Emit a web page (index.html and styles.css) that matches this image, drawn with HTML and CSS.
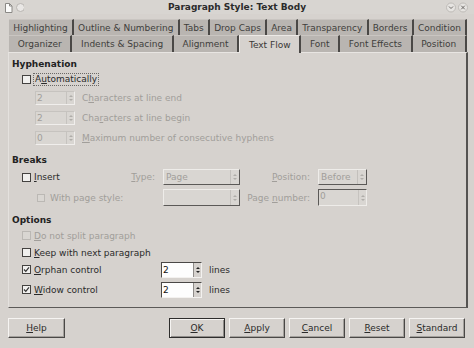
FILE: index.html
```html
<!DOCTYPE html>
<html lang="en">
<head>
    <meta charset="UTF-8">
    <title>Paragraph Style: Text Body</title>
    <link rel="stylesheet" href="styles.css">
</head>
<body>
<div class="window">
    <div class="titlebar">
        <div class="tb-left">
            <svg width="24" height="12" viewBox="0 0 24 12">
                <path d="M5.5 2.5 h4 l2.5 2.5 v6.5 h-6.5 z" fill="#fbfbfa" stroke="#8a8885" stroke-width="1"/>
                <path d="M9.5 2.5 v2.5 h2.5" fill="none" stroke="#8a8885" stroke-width="1"/>
                <circle cx="20.5" cy="6.5" r="4" fill="#e9e7e5" stroke="#b9b6b2"/>
            </svg>
        </div>
        <div class="title">Paragraph Style: Text Body</div>
        <div class="tb-right">
            <svg width="26" height="12" viewBox="0 0 26 12">
                <circle cx="7" cy="6.5" r="4.5" fill="#e6e4e1" stroke="#bebbb7"/>
                <path d="M5 5.5 l2 2 l2 -2" fill="none" stroke="#6d6a67" stroke-width="1"/>
                <circle cx="19" cy="6.5" r="4.5" fill="#e6e4e1" stroke="#bebbb7"/>
                <path d="M17.2 4.7 l3.6 3.6 M20.8 4.7 l-3.6 3.6" fill="none" stroke="#6d6a67" stroke-width="1"/>
            </svg>
        </div>
    </div>

    <div class="tabs">
        <div class="tabrow row-top">
            <div class="tab">Highlighting</div>
            <div class="tab">Outline &amp; Numbering</div>
            <div class="tab">Tabs</div>
            <div class="tab">Drop Caps</div>
            <div class="tab">Area</div>
            <div class="tab">Transparency</div>
            <div class="tab">Borders</div>
            <div class="tab">Condition</div>
        </div>
        <div class="tabrow row-bottom">
            <div class="tab">Organizer</div>
            <div class="tab">Indents &amp; Spacing</div>
            <div class="tab">Alignment</div>
            <div class="tab active">Text Flow</div>
            <div class="tab">Font</div>
            <div class="tab">Font Effects</div>
            <div class="tab">Position</div>
        </div>
    </div>

    <div class="panel">
        <!-- Hyphenation -->
        <div class="group">
            <h2 class="ghead">Hyphenation</h2>
            <div class="auto-row">
                <span class="chk"></span>
                <span class="focus">A<u>u</u>tomatically</span>
            </div>
            <div class="sp-row">
                <div class="spin dis"><span class="val">2</span><span class="arr"><i class="up"></i><i class="dn"></i></span></div>
                <span class="lbl dis">C<u>h</u>aracters at line end</span>
            </div>
            <div class="sp-row">
                <div class="spin dis"><span class="val">2</span><span class="arr"><i class="up"></i><i class="dn"></i></span></div>
                <span class="lbl dis">Cha<u>r</u>acters at line begin</span>
            </div>
            <div class="sp-row">
                <div class="spin dis"><span class="val">0</span><span class="arr"><i class="up"></i><i class="dn"></i></span></div>
                <span class="lbl dis"><u>M</u>aximum number of consecutive hyphens</span>
            </div>
        </div>

        <!-- Breaks -->
        <div class="group breaks">
            <h2 class="ghead">Breaks</h2>
            <div class="brk-row first">
                <div class="brk-check"><span class="chk"></span><span class="lbl"><u>I</u>nsert</span></div>
                <span class="rlbl dis"><u>T</u>ype:</span>
                <div class="combo dis"><span class="val">Page</span><span class="arr"><i class="up"></i><i class="dn"></i></span></div>
                <span class="rlbl dis"><u>P</u>osition:</span>
                <div class="combo dis small"><span class="val">Before</span><span class="arr"><i class="up"></i><i class="dn"></i></span></div>
            </div>
            <div class="brk-row second">
                <div class="brk-check sub"><span class="chk dis"></span><span class="lbl dis">With page style:</span></div>
                <span class="rlbl"></span>
                <div class="combo dis tall"><span class="val"></span><span class="arr"><i class="up"></i><i class="dn"></i></span></div>
                <span class="rlbl dis">Page <u>n</u>umber:</span>
                <div class="spin dis tall"><span class="val">0</span><span class="arr"><i class="up"></i><i class="dn"></i></span></div>
            </div>
        </div>

        <!-- Options -->
        <div class="group options">
            <h2 class="ghead">Options</h2>
            <div class="opt-row">
                <div class="brk-check"><span class="chk dis"></span><span class="lbl dis"><u>D</u>o not split paragraph</span></div>
            </div>
            <div class="opt-row">
                <div class="brk-check"><span class="chk"></span><span class="lbl"><u>K</u>eep with next paragraph</span></div>
            </div>
            <div class="opt-row">
                <div class="brk-check wide"><span class="chk on"><svg width="7" height="7" viewBox="0 0 7 7"><path d="M1 3.5 l1.8 1.8 l3.2 -4" fill="none" stroke="#333" stroke-width="1.2"/></svg></span><span class="lbl"><u>O</u>rphan control</span></div>
                <div class="spin live"><span class="val">2</span><span class="arr"><i class="up"></i><i class="dn"></i></span></div>
                <span class="lines">lines</span>
            </div>
            <div class="opt-row last">
                <div class="brk-check wide"><span class="chk on"><svg width="7" height="7" viewBox="0 0 7 7"><path d="M1 3.5 l1.8 1.8 l3.2 -4" fill="none" stroke="#333" stroke-width="1.2"/></svg></span><span class="lbl"><u>W</u>idow control</span></div>
                <div class="spin live"><span class="val">2</span><span class="arr"><i class="up"></i><i class="dn"></i></span></div>
                <span class="lines">lines</span>
            </div>
        </div>
    </div>

    <div class="buttons">
        <button class="btn help"><u>H</u>elp</button>
        <button class="btn default"><u>O</u>K</button>
        <button class="btn"><u>A</u>pply</button>
        <button class="btn"><u>C</u>ancel</button>
        <button class="btn"><u>R</u>eset</button>
        <button class="btn"><u>S</u>tandard</button>
    </div>
</div>
</body>
</html>
```
FILE: styles.css
```css
*{
    margin: 0;
    padding: 0;
    box-sizing: border-box;
}
body{
    width: 474px;
    height: 348px;
    overflow: hidden;
    background-color: #d6d2ce;
    font-family: "DejaVu Sans", sans-serif;
    font-size: 9px;
    color: #2a2a2a;
}
u{
    text-decoration: underline;
    text-underline-offset: 1px;
}

/* title bar */
.titlebar{
    height: 14px;
    display: grid;
    grid-template-columns: 1fr auto 1fr;
    align-items: center;
    background-color: #d8d5d1;
}
.tb-left svg{
    display: block;
}
.tb-right{
    display: flex;
    justify-content: flex-end;
    padding-right: 4px;
}
.tb-right svg{
    display: block;
}
.title{
    font-weight: bold;
    color: #2b2b2b;
    line-height: 14px;
}

/* tabs */
.tabs{
    margin: 5px 7px 0 9px;
}
.tabrow{
    display: flex;
}
.row-top{
    height: 16px;
}
.row-bottom{
    height: 17px;
}
.tab{
    flex: 1 1 auto;
    text-align: center;
    white-space: nowrap;
    padding: 0 3px;
    background-color: #b9b5b1;
    color: #403e3c;
    border-right: 2px solid #4a4846;
    border-top: 1px solid #c9c5c1;
    display: flex;
    align-items: center;
    justify-content: center;
}
.tab.active{
    background-color: #d6d2ce;
    border-top: 1px solid #ece9e6;
    border-left: 1px solid #ece9e6;
    color: #3a3836;
    margin-bottom: -1px;
    position: relative;
    z-index: 1;
}

/* panel */
.panel{
    margin: 0 6px 0 8px;
    height: 256px;
    padding: 4px 0 0 3px;
    border-left: 1px solid #e4e1de;
    border-right: 2px solid #555351;
    border-bottom: 1px solid #5c5a58;
    border-top: 1px solid #e8e5e2;
}
.ghead{
    font-size: 9px;
    font-weight: bold;
    height: 14px;
    line-height: 14px;
    color: #222;
}
.breaks{
    margin-top: 5px;
}
.options{
    margin-top: 7px;
}

.dis{
    color: #a19e9a;
}
.chk{
    width: 9px;
    height: 9px;
    border: 1px solid #444240;
    background-color: #f1f0ee;
    flex: none;
    display: flex;
    align-items: center;
    justify-content: center;
}
.chk.dis{
    border-color: #bbb8b4;
    background-color: #d9d6d2;
}

.auto-row{
    height: 17px;
    display: flex;
    align-items: center;
    padding-left: 10px;
}
.auto-row .chk{
    margin-right: 2px;
}
.focus{
    border: 1px dotted #6b6966;
    height: 13px;
    line-height: 11px;
    padding: 0 1px;
}

.sp-row{
    height: 20px;
    display: flex;
    align-items: center;
    padding-left: 23px;
}
.sp-row .lbl{
    margin-left: 7px;
}

/* spin boxes & combos */
.spin, .combo{
    display: flex;
    height: 14px;
    width: 40px;
    border: 1px solid;
    border-color: #c6c3bf #f0eeec #f0eeec #c6c3bf;
    background-color: #d9d6d2;
}
.spin .val, .combo .val{
    flex: 1;
    line-height: 12px;
    padding-left: 1px;
}
.spin .arr, .combo .arr{
    width: 8px;
    display: flex;
    flex-direction: column;
    align-items: center;
    justify-content: center;
    gap: 2px;
    border-left: 1px solid #c6c3bf;
}
.up{
    width: 0;
    height: 0;
    border-left: 2px solid transparent;
    border-right: 2px solid transparent;
    border-bottom: 2px solid #b0ada9;
}
.dn{
    width: 0;
    height: 0;
    border-left: 2px solid transparent;
    border-right: 2px solid transparent;
    border-top: 2px solid #b0ada9;
}

.brk-row{
    display: grid;
    grid-template-columns: 109px 32px 77px 78px 49px;
    align-items: center;
    padding-left: 10px;
}
.brk-row.first{
    margin-top: 2px;
    height: 16px;
}
.brk-row.second{
    margin-top: 4px;
    height: 17px;
}
.brk-check{
    display: flex;
    align-items: center;
}
.brk-check .lbl{
    margin-left: 3px;
}
.brk-check.sub{
    padding-left: 15px;
}
.brk-check.sub .chk{
    width: 8px;
    height: 8px;
}
.brk-check.sub .lbl{
    margin-left: 5px;
}
.rlbl{
    text-align: right;
    padding-right: 8px;
    white-space: nowrap;
}
.combo{
    width: 77px;
    height: 16px;
    border-color: #eeece9 #5b5957 #5b5957 #eeece9;
}
.combo.small{
    width: 49px;
}
.combo .val{
    line-height: 14px;
    padding-left: 2px;
}
.combo .arr{
    border-left: 1px solid #c3c0bc;
    width: 9px;
}
.combo.tall{
    height: 17px;
}
.brk-row .spin.tall{
    width: 49px;
    height: 17px;
    border-color: #5b5957 #eeece9 #eeece9 #5b5957;
}

.opt-row{
    height: 17px;
    display: flex;
    align-items: center;
    padding-left: 10px;
}
.opt-row.last{
    margin-top: 3px;
}
.brk-check.wide{
    width: 139px;
}
.spin.live{
    width: 41px;
    height: 16px;
    background-color: #fdfdfd;
    border-color: #4a4846 #f3f1ef #f3f1ef #4a4846;
    color: #111;
}
.spin.live .val{
    line-height: 14px;
}
.spin.live .arr{
    background-color: #d6d2ce;
    border-left: 1px solid #8f8c89;
}
.spin.live .up{
    border-bottom-color: #222;
}
.spin.live .dn{
    border-top-color: #222;
}
.lines{
    margin-left: 7px;
}

/* dialog buttons */
.buttons{
    display: flex;
    gap: 4px;
    margin: 10px 9px 0 8px;
}
.btn{
    width: 56px;
    height: 20px;
    font-family: "DejaVu Sans", sans-serif;
    font-size: 9px;
    color: #2a2a2a;
    background-color: #d6d2ce;
    border: 1px solid;
    border-color: #f6f4f2 #4a4846 #4a4846 #f6f4f2;
    box-shadow: inset -1px -1px 0 #a3a09c;
}
.btn.help{
    width: 57px;
    margin-right: auto;
}
.btn.default{
    outline: 1px solid #2e2d2c;
    outline-offset: -1px;
    border-color: #2e2d2c;
    box-shadow: inset 1px 1px 0 #f6f4f2, inset -1px -1px 0 #8f8c89;
}
```
